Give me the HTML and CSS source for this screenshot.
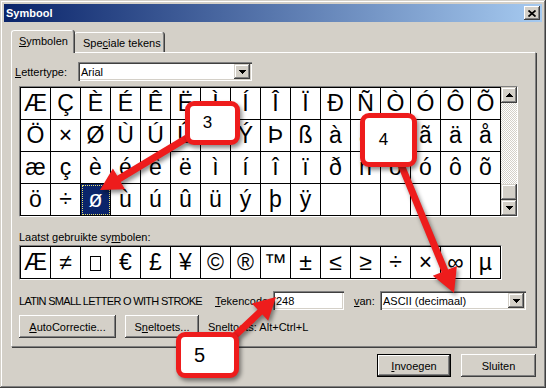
FILE: index.html
```html
<!DOCTYPE html>
<html>
<head>
<meta charset="utf-8">
<link rel="stylesheet" href="styles.css">
</head>
<body>
<div class="window">
  <div class="titlebar">
    <span class="title">Symbool</span>
    <div class="close"><svg width="8" height="7" viewBox="0 0 8 7"><path d="M0.5 0.5l7 6M7.5 0.5l-7 6" stroke="#000" stroke-width="1.7" fill="none"/></svg></div>
  </div>
  <div class="content">
    <div class="tabs">
      <div class="tab active"><u>S</u>ymbolen</div>
      <div class="tab inactive">Spe<u>c</u>iale tekens</div>
    </div>
    <div class="panel">
      <div class="font-row">
        <span class="font-label"><u>L</u>ettertype:</span>
        <div class="combo font-combo"><span class="combo-text">Arial</span><span class="drop-btn"><svg width="7" height="4" viewBox="0 0 7 4"><path d="M0 0h7v1H6v1H5v1H4v1H3V3H2V2H1V1H0z"/></svg></span></div>
      </div>
      <div class="charmap">
        <div class="grid">
          <span class="cell">Æ</span><span class="cell">Ç</span><span class="cell">È</span><span class="cell">É</span><span class="cell">Ê</span><span class="cell">Ë</span><span class="cell">Ì</span><span class="cell">Í</span><span class="cell">Î</span><span class="cell">Ï</span><span class="cell">Ð</span><span class="cell">Ñ</span><span class="cell">Ò</span><span class="cell">Ó</span><span class="cell">Ô</span><span class="cell">Õ</span>
          <span class="cell">Ö</span><span class="cell">×</span><span class="cell">Ø</span><span class="cell">Ù</span><span class="cell">Ú</span><span class="cell">Û</span><span class="cell">Ü</span><span class="cell">Ý</span><span class="cell">Þ</span><span class="cell">ß</span><span class="cell">à</span><span class="cell">á</span><span class="cell">â</span><span class="cell">ã</span><span class="cell">ä</span><span class="cell">å</span>
          <span class="cell">æ</span><span class="cell">ç</span><span class="cell">è</span><span class="cell">é</span><span class="cell">ê</span><span class="cell">ë</span><span class="cell">ì</span><span class="cell">í</span><span class="cell">î</span><span class="cell">ï</span><span class="cell">ð</span><span class="cell">ñ</span><span class="cell">ò</span><span class="cell">ó</span><span class="cell">ô</span><span class="cell">õ</span>
          <span class="cell">ö</span><span class="cell">÷</span><span class="cell selected">ø</span><span class="cell">ù</span><span class="cell">ú</span><span class="cell">û</span><span class="cell">ü</span><span class="cell">ý</span><span class="cell">þ</span><span class="cell">ÿ</span><span class="cell"></span><span class="cell"></span><span class="cell"></span><span class="cell"></span><span class="cell"></span><span class="cell"></span>
        </div>
        <div class="scrollbar">
          <span class="sb-btn"><svg width="7" height="4" viewBox="0 0 7 4"><path d="M3 0h1v1h1v1h1v1h1v1H0V3h1V2h1V1h1z"/></svg></span>
          <span class="sb-track"></span>
          <span class="sb-btn"></span>
          <span class="sb-btn"><svg width="7" height="4" viewBox="0 0 7 4"><path d="M0 0h7v1H6v1H5v1H4v1H3V3H2V2H1V1H0z"/></svg></span>
        </div>
      </div>
      <div class="recent-label">Laatst gebruikte sy<u>m</u>bolen:</div>
      <div class="recent-wrap">
        <div class="recent">
          <span class="cell">Æ</span><span class="cell thin">≠</span><span class="cell"><span class="missing"></span></span><span class="cell">€</span><span class="cell">£</span><span class="cell">¥</span><span class="cell">©</span><span class="cell">®</span><span class="cell">™</span><span class="cell">±</span><span class="cell">≤</span><span class="cell">≥</span><span class="cell">÷</span><span class="cell">×</span><span class="cell">∞</span><span class="cell">µ</span>
        </div>
      </div>
      <div class="info-row">
        <span class="charname">LATIN SMALL LETTER O WITH STROKE</span>
        <span class="code-label"><u>T</u>ekencode:</span>
        <div class="field code-field">248</div>
        <span class="van-label"><u>v</u>an:</span>
        <div class="combo van-combo"><span class="combo-text">ASCII (decimaal)</span><span class="drop-btn"><svg width="7" height="4" viewBox="0 0 7 4"><path d="M0 0h7v1H6v1H5v1H4v1H3V3H2V2H1V1H0z"/></svg></span></div>
      </div>
      <div class="btn-row">
        <div class="btn btn-auto"><u>A</u>utoCorrectie...</div>
        <div class="btn btn-snel">S<u>n</u>eltoets...</div>
        <span class="shortcut">Sneltoets: Alt+Ctrl+L</span>
      </div>
    </div>
    <div class="footer">
      <div class="btn default btn-insert"><u>I</u>nvoegen</div>
      <div class="btn btn-close">Sluiten</div>
    </div>
  </div>

  <svg class="arrows" width="546" height="388" viewBox="0 0 546 388">
    <polygon points="195.0,129.0 117.2,175.8 112.9,168.5 100,190 125.0,189.2 120.7,181.9 198.5,135.0"/>
    <polygon points="391.8,151.3 441.6,272.2 432.8,275.8 454,293 456.9,265.9 448.1,269.5 398.2,148.7"/>
    <polygon points="227.4,347.6 262.4,314.6 268.2,320.8 276,297 251.8,303.4 257.6,309.6 222.6,342.5"/>
  </svg>
  <div class="callout c3">3</div>
  <div class="callout c4">4</div>
  <div class="callout c5">5</div>
</div>
</body>
</html>
```

FILE: styles.css
```css
* { box-sizing: border-box; }
html, body { margin: 0; padding: 0; }
body {
  width: 546px;
  height: 388px;
  overflow: hidden;
  background: #d4d0c8;
  font-family: "Liberation Sans", Arial, sans-serif;
  font-size: 11px;
  color: #000;
}
u { text-decoration: underline; text-underline-offset: 1px; }

.window {
  position: relative;
  width: 546px;
  height: 388px;
  padding: 4px;
  background: #d4d0c8;
  box-shadow: inset -1px -1px #404040, inset 1px 1px #d4d0c8, inset -2px -2px #808080, inset 2px 2px #fff;
}

.titlebar {
  height: 18px;
  display: flex;
  align-items: center;
  justify-content: space-between;
  padding: 0 2px 0 2px;
  background: linear-gradient(to right, #0a246a, #a6caf0);
  color: #fff;
}
.title { font-weight: bold; font-size: 11px; }
.close {
  width: 16px;
  height: 14px;
  display: flex;
  align-items: center;
  justify-content: center;
  background: #d4d0c8;
  box-shadow: inset -1px -1px #404040, inset 1px 1px #fff, inset -2px -2px #808080, inset 2px 2px #d4d0c8;
}

.content { padding: 8px 6px 0 7px; }

.tabs { display: flex; align-items: flex-end; height: 22px; }
.tab {
  display: flex;
  align-items: center;
  padding-left: 7px;
  background: #d4d0c8;
  border-top: 1px solid #fff;
  border-left: 1px solid #fff;
  border-right: 1px solid #808080;
  border-radius: 3px 3px 0 0;
  box-shadow: 1px 0 0 #404040;
}
.tab.active {
  position: relative;
  z-index: 1;
  width: 63px;
  height: 23px;
  margin-bottom: -1px;
  padding-bottom: 2px;
}
.tab.inactive { width: 90px; height: 20px; padding-left: 8px; }

.panel {
  height: 295px;
  border-top: 1px solid #fff;
  border-left: 1px solid #fff;
  border-right: 1px solid #808080;
  border-bottom: 1px solid #808080;
  box-shadow: 1px 1px 0 #404040;
  padding: 9px 8px 0 7px;
}

.font-row { display: flex; align-items: center; height: 19px; margin-left: -4px; }
.font-label { width: 63px; }

.combo, .field {
  height: 19px;
  background: #fff;
  box-shadow: inset 1px 1px #808080, inset 2px 2px #404040, inset -1px -1px #fff, inset -2px -2px #d4d0c8;
  display: flex;
  align-items: center;
  padding: 2px;
}
.combo-text { flex: 1; padding-left: 1px; }
.drop-btn {
  width: 16px;
  height: 15px;
  display: flex;
  align-items: center;
  justify-content: center;
  background: #d4d0c8;
  box-shadow: inset -1px -1px #404040, inset 1px 1px #d4d0c8, inset -2px -2px #808080, inset 2px 2px #fff;
}
.font-combo { width: 174px; }

.charmap {
  display: flex;
  width: 499px;
  margin-top: 5px;
  border-top: 1px solid #808080;
  border-left: 1px solid #808080;
  border-right: 1px solid #fff;
  border-bottom: 1px solid #fff;
}
.grid, .recent {
  display: grid;
  grid-template-columns: repeat(16, 30px);
  grid-auto-rows: 32px;
  border-top: 1px solid #000;
  border-left: 1px solid #000;
  background: #fff;
}
.cell {
  display: flex;
  align-items: center;
  justify-content: center;
  border-right: 1px solid #000;
  border-bottom: 1px solid #000;
  font-size: 23px;
  line-height: 26px;
  padding-bottom: 2px;
}
.cell.selected {
  background: #0a246a;
  color: #fff;
  outline: 1px dotted #e8e070;
  outline-offset: -2px;
}
.cell.thin { font-weight: 300; }
.missing { width: 11px; height: 15px; border: 1px solid #000; margin-top: 3px; }

.scrollbar {
  width: 16px;
  display: flex;
  flex-direction: column;
  background: repeating-conic-gradient(#fff 0 25%, #d4d0c8 0 50%) 0 0 / 2px 2px;
}
.sb-btn {
  width: 16px;
  height: 16px;
  display: flex;
  align-items: center;
  justify-content: center;
  background: #d4d0c8;
  box-shadow: inset -1px -1px #404040, inset 1px 1px #d4d0c8, inset -2px -2px #808080, inset 2px 2px #fff;
}
.sb-track { flex: 1; }

.recent-label { margin-top: 13px; height: 14px; line-height: 14px; }
.recent-wrap {
  width: 483px;
  margin-top: 1px;
  border-top: 1px solid #808080;
  border-left: 1px solid #808080;
  border-right: 1px solid #fff;
  border-bottom: 1px solid #fff;
}

.info-row { display: flex; align-items: center; height: 19px; margin-top: 11px; }
.charname { width: 196px; letter-spacing: -0.7px; white-space: nowrap; }
.code-label { width: 58px; }
.code-field { width: 71px; padding-left: 3px; }
.van-label { width: 26px; margin-left: 10px; }
.van-combo { width: 146px; }

.btn {
  height: 23px;
  display: flex;
  align-items: center;
  justify-content: center;
  background: #d4d0c8;
  box-shadow: inset -1px -1px #404040, inset 1px 1px #fff, inset -2px -2px #808080, inset 2px 2px #d4d0c8;
}
.btn.default {
  box-shadow: inset 0 0 0 1px #000, inset -2px -2px #404040, inset 2px 2px #fff, inset -3px -3px #808080;
}
.btn-row { display: flex; align-items: center; margin-top: 5px; height: 23px; }
.btn-auto { width: 97px; }
.btn-snel { width: 74px; margin-left: 9px; }
.shortcut { margin-left: 9px; }

.footer { display: flex; justify-content: flex-end; gap: 10px; margin-top: 7px; }
.btn-insert { width: 74px; }
.btn-close { width: 75px; }

.arrows {
  position: absolute;
  left: 0;
  top: 0;
  fill: #ee1c1c;
  filter: drop-shadow(2px 3px 2px rgba(0, 0, 0, 0.45));
}
.callout {
  position: absolute;
  display: flex;
  align-items: center;
  justify-content: center;
  background: #fff;
  border: 5px solid #ee1c1c;
  border-radius: 9px;
  box-shadow: 2px 3px 4px rgba(0, 0, 0, 0.45);
  font-family: "Liberation Sans", Arial, sans-serif;
  font-size: 17px;
  padding-right: 10px;
}
.c3 { left: 185px; top: 101px; width: 55px; height: 44px; }
.c4 { left: 360px; top: 113px; width: 57px; height: 54px; }
.c5 { left: 176px; top: 332px; width: 63px; height: 46px; font-size: 20px; padding-right: 16px; }
```
